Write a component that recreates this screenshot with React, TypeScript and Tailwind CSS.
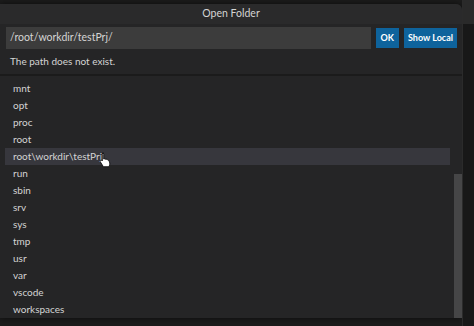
import React from 'react';

const items = ['mnt', 'opt', 'proc', 'root', 'root\\workdir\\testPrj', 'run', 'sbin', 'srv', 'sys', 'tmp', 'usr', 'var', 'vscode', 'workspaces'];

function HandCursor() {
  return (
    <svg width="12" height="16" viewBox="0 0 12 16" className="absolute -right-[9px] top-[3px]">
      <path
        d="M3.5 1.2c.7 0 1.2.5 1.2 1.2v4.6l.4-.1c.5-.3 1.2-.1 1.5.4.5-.3 1.2-.1 1.5.4.5-.2 1.1 0 1.4.5l.9 1.6c.4.8.5 1.7.3 2.6l-.6 2.3H4.4L1.3 9.8c-.4-.5-.3-1.2.2-1.5.5-.3 1.1-.2 1.4.2l.4.5V2.4c0-.7.5-1.2 1.2-1.2z"
        fill="#ffffff"
        stroke="#000000"
        strokeWidth="0.8"
      />
    </svg>
  );
}

export default function App() {
  return (
    <div className="w-[474px] h-[326px] bg-[#1c1c1c] flex overflow-hidden text-[#d4d4d4] text-[10px]" style={{ fontFamily: 'Lato, "Noto Sans", sans-serif' }}>
      <div className="w-[462px] mt-[4px] h-[314px] bg-[#252526] rounded-tr-[6px] flex flex-col shadow-[0_0_6px_rgba(0,0,0,0.6)]">
        <div className="h-[21px] flex items-center justify-center bg-[#2a2a2b] rounded-tr-[6px] text-[10.5px]">Open Folder</div>
        <div className="flex gap-[5px] pl-[6px] pr-[5px] mt-[3px]">
          <div className="flex-1 h-[22px] bg-[#3c3c3c] flex items-center px-[4px] text-[10.5px]">/root/workdir/testPrj/</div>
          <div className="h-[20px] mt-[1px] px-[5px] bg-[#0e639c] flex items-center text-white font-bold text-[9px]">OK</div>
          <div className="h-[20px] mt-[1px] px-[4px] bg-[#0e639c] flex items-center text-white font-bold text-[9px]">Show Local</div>
        </div>
        <div className="px-[10px] pt-[5px] h-[26px] text-[10px]">The path does not exist.</div>
        <div className="h-[2px] bg-[#1b1b1b]" />
        <div className="flex-1 flex mt-[4px] pl-[5px]">
          <div className="flex-1 flex flex-col">
            {items.map((it, i) => (
              <div key={it} className={`h-[17px] flex items-center pl-[8px] text-[10px] ${i === 4 ? 'bg-[#37373d]' : ''}`}>
                <span className="relative">
                  {it}
                  {i === 4 && <HandCursor />}
                </span>
              </div>
            ))}
          </div>
          <div className="w-[8px] flex flex-col ml-[4px]">
            <div className="h-[94px]" />
            <div className="flex-1 bg-[#464647]" />
          </div>
        </div>
      </div>
      <div className="flex-1 flex flex-col border-l border-[#2b2b2b]">
        <div className="h-[24px] bg-[#2a2a2a]" />
        <div className="flex-1 bg-[#181818]" />
      </div>
    </div>
  );
}
